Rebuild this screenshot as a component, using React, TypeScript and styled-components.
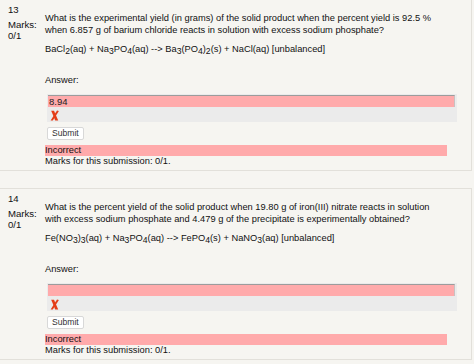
import React, { FC } from 'react';
import styled, { createGlobalStyle } from 'styled-components';

const GlobalStyle = createGlobalStyle`
	html, body {
		margin: 0;
		padding: 0;
		background: #f6f5f1;
	}
	body {
		font-family: 'Liberation Sans', Arial, Helvetica, sans-serif;
		font-size: 9.3px;
		line-height: 12px;
		color: #111;
	}
`;

const Page = styled.div`
	display: flex;
	flex-direction: column;
	gap: 17px;
	width: 472px;
	margin-top: -1px;
`;

const Card = styled.div`
	display: grid;
	grid-template-columns: 45px 1fr;
	background: #f6f5f1;
	border: 1px solid #e2e0da;
	border-left: none;
	padding: 4px 14px 3px 0;
`;

const Info = styled.div`
	padding-left: 8px;
	display: flex;
	flex-direction: column;
	font-size: 9.6px;
`;

const Number = styled.div`
	margin-bottom: 4px;
`;

const MarksLine = styled.div`
	line-height: 10.5px;
`;

const Content = styled.div`
	padding-top: 8px;
	display: flex;
	flex-direction: column;
`;

const Question = styled.div`
	white-space: nowrap;
`;

const Equation = styled.div`
	margin-top: 7px;
	white-space: nowrap;

	sub {
		font-size: 8.6px;
		line-height: 0;
		vertical-align: -2px;
	}
`;

const AnswerLabel = styled.div`
	margin-top: 19px;
`;

const AnswerBlock = styled.div`
	margin: 8px 0 0 2px;
	background: #ebebeb;
	padding: 1px 2px 0 1px;
	height: 27px;
`;

const AnswerInput = styled.div`
	height: 11px;
	line-height: 11px;
	background: #ffaaab;
	border-top: 1px solid #9c9c9c;
	border-right: 1px solid #c9c1c1;
	padding-left: 1px;
	font-size: 9.5px;
	color: #222;
`;

const MarkIcon = styled.svg`
	display: block;
	margin: 3px 0 0 2px;
`;

const SubmitButton = styled.button`
	align-self: flex-start;
	margin: 5px 0 0 2px;
	height: 13px;
	padding: 0 4px;
	font-family: 'Liberation Sans', Arial, sans-serif;
	font-size: 8.6px;
	line-height: 11px;
	color: #333;
	background: #ffffff;
	border: 1px solid #d8d8d8;
	border-radius: 2px;
`;

const Feedback = styled.div<{ $state: 'incorrect' | 'plain' }>`
	margin-top: ${(p) => (p.$state === 'incorrect' ? '5px' : '0')};
	margin-right: 10px;
	height: ${(p) => (p.$state === 'incorrect' ? '11px' : 'auto')};
	line-height: 11px;
	background: ${(p) => (p.$state === 'incorrect' ? '#ffaaab' : 'transparent')};
	color: #111;
`;

const CrossMark: FC = () => (
	<MarkIcon width='9' height='11' viewBox='0 0 9 11'>
		<path d='M1.2 0.8 L4 0.8 L8.2 10.6 L5.2 10.6 Z' fill='#e43d17' />
		<path d='M7 0.6 L8.9 0.9 L2.8 10.6 L0.6 10.4 Z' fill='#e43d17' />
	</MarkIcon>
);

type QuestionData = {
	num: number;
	lines: string[];
	equation: React.ReactNode;
	answer: string;
};

const questions: QuestionData[] = [
	{
		num: 13,
		lines: [
			'What is the experimental yield (in grams) of the solid product when the percent yield is 92.5 %',
			'when 6.857 g of barium chloride reacts in solution with excess sodium phosphate?',
		],
		equation: (
			<>
				BaCl<sub>2</sub>(aq) + Na<sub>3</sub>PO<sub>4</sub>(aq) --&gt; Ba<sub>3</sub>(PO<sub>4</sub>)<sub>2</sub>(s) +
				NaCl(aq) [unbalanced]
			</>
		),
		answer: '8.94',
	},
	{
		num: 14,
		lines: [
			'What is the percent yield of the solid product when 19.80 g of iron(III) nitrate reacts in solution',
			'with excess sodium phosphate and 4.479 g of the precipitate is experimentally obtained?',
		],
		equation: (
			<>
				Fe(NO<sub>3</sub>)<sub>3</sub>(aq) + Na<sub>3</sub>PO<sub>4</sub>(aq) --&gt; FePO<sub>4</sub>(s) + NaNO
				<sub>3</sub>(aq) [unbalanced]
			</>
		),
		answer: '',
	},
];

const App: FC = () => {
	return (
		<>
			<GlobalStyle />
			<Page>
				{questions.map((q) => (
					<Card key={q.num}>
						<Info>
							<Number>{q.num}</Number>
							<MarksLine>Marks:</MarksLine>
							<MarksLine>0/1</MarksLine>
						</Info>
						<Content>
							<Question>
								{q.lines[0]}
								<br />
								{q.lines[1]}
							</Question>
							<Equation>{q.equation}</Equation>
							<AnswerLabel>Answer:</AnswerLabel>
							<AnswerBlock>
								<AnswerInput>{q.answer}</AnswerInput>
								<CrossMark />
							</AnswerBlock>
							<SubmitButton>Submit</SubmitButton>
							<Feedback $state='incorrect'>Incorrect</Feedback>
							<Feedback $state='plain'>Marks for this submission: 0/1.</Feedback>
						</Content>
					</Card>
				))}
			</Page>
		</>
	);
};

export default App;
